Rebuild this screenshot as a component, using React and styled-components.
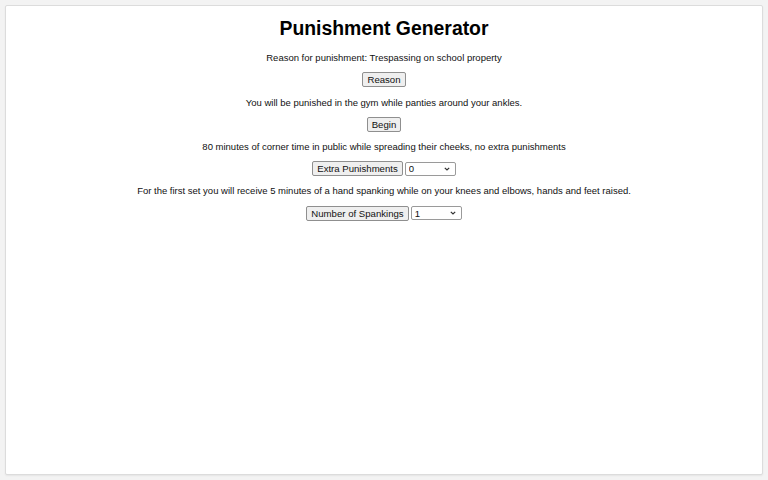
import React from 'react'
import styled, { createGlobalStyle } from 'styled-components'

const GlobalStyle = createGlobalStyle`
  html, body {
    margin: 0;
    background: #f3f3f3;
    font-family: 'Liberation Sans', Arial, sans-serif;
    color: #111;
  }
`;

const Card = styled.main`
  margin: 5px;
  height: 470px;
  box-sizing: border-box;
  background: #fff;
  border: 1px solid #dcdcdc;
  border-radius: 2px;
  box-shadow: 0 1px 2px rgba(0, 0, 0, 0.06);
  display: flex;
  flex-direction: column;
  align-items: center;
  gap: 8.2px;
  padding-top: 10px;
`;

const Title = styled.h1`
  margin: 0 0 3px 0;
  font-size: 19.4px;
  line-height: 24px;
  font-weight: 700;
  color: #000;
`;

const Line = styled.p`
  margin: 0;
  font-size: 9.5px;
  line-height: 13px;
  text-align: center;
`;

const Controls = styled.div`
  display: flex;
  align-items: center;
  gap: 2px;
`;

const Button = styled.button`
  font-family: 'Liberation Sans', Arial, sans-serif;
  font-size: 9.6px;
  height: 15px;
  padding: 0 4px;
  color: #111;
  background: #efefef;
  border: 1px solid #8f8f8f;
  border-radius: 2px;
  line-height: 13px;
`;

const SelectWrap = styled.div`
  position: relative;
  display: flex;

  svg {
    position: absolute;
    right: 6px;
    top: 5px;
    pointer-events: none;
  }
`;

const Select = styled.select`
  appearance: none;
  font-family: 'Liberation Sans', Arial, sans-serif;
  font-size: 9.6px;
  height: 14px;
  width: ${p => p.$width}px;
  padding: 0 0 0 3px;
  color: #111;
  background: #fff;
  border: 1px solid #9a9a9a;
  border-radius: 2px;
`;

const Chevron = () => (
  <svg width="6" height="4" viewBox="0 0 6 4">
    <path d="M0.8 0.8 L3 3 L5.2 0.8" fill="none" stroke="#333" strokeWidth="1.2" />
  </svg>
);

const range = n => Array.from({ length: n }, (_, i) => i);

const Picker = ({ options, value }) => (
  <SelectWrap>
    <Select $width={51} defaultValue={value}>
      {options.map(n => <option key={n} value={n}>{n}</option>)}
    </Select>
    <Chevron />
  </SelectWrap>
);

export default function App() {
  return (
    <>
      <GlobalStyle />
      <Card>
        <Title>Punishment Generator</Title>
        <Line>Reason for punishment: Trespassing on school property</Line>
        <Button>Reason</Button>
        <Line>You will be punished in the gym while panties around your ankles.</Line>
        <Button>Begin</Button>
        <Line>80 minutes of corner time in public while spreading their cheeks, no extra punishments</Line>
        <Controls>
          <Button>Extra Punishments</Button>
          <Picker options={range(6)} value={0} />
        </Controls>
        <Line>For the first set you will receive 5 minutes of a hand spanking while on your knees and elbows, hands and feet raised.</Line>
        <Controls>
          <Button>Number of Spankings</Button>
          <Picker options={range(5).map(n => n + 1)} value={1} />
        </Controls>
      </Card>
    </>
  )
}
